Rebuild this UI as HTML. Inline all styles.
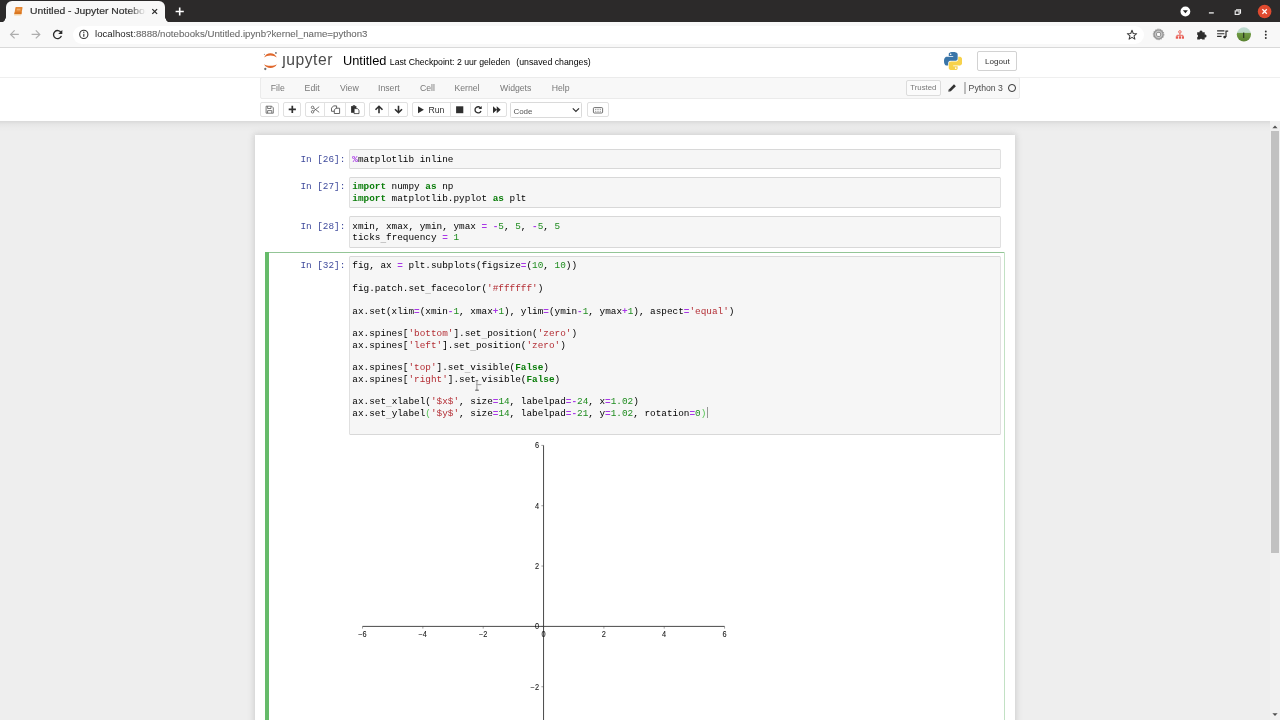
<!DOCTYPE html>
<html>
<head>
<meta charset="utf-8">
<title>Untitled - Jupyter Notebook</title>
<style>
*{box-sizing:border-box;margin:0;padding:0}
html,body{width:1280px;height:720px;overflow:hidden;background:#eeeeee;font-family:"Liberation Sans",sans-serif;color:#000}
.abs{position:absolute}
#root{will-change:transform;position:relative;width:1280px;height:720px;overflow:hidden;background:#eeeeee}
/* ---------- browser chrome ---------- */
#titlebar{left:0;top:0;width:1280px;height:22.4px;background:#2c2a2a}
#tab{left:5.6px;top:1px;width:159.4px;height:22px;background:#f8f8f8;border-radius:6px 6px 0 0}
#tab:before,#tab:after{content:"";position:absolute;bottom:0;width:6px;height:6px;background:radial-gradient(circle at 0 0,rgba(0,0,0,0) 5.5px,#f8f8f8 6px)}
#tab:before{left:-6px}
#tab:after{right:-6px;background:radial-gradient(circle at 100% 0,rgba(0,0,0,0) 5.5px,#f8f8f8 6px)}
#tabtitle{-webkit-text-stroke:0.2px #333;left:29.7px;font-size:9.8px;line-height:14px;color:#333;white-space:nowrap;width:108.6px;overflow:hidden;transform:scaleX(1.059);transform-origin:0 0}
#tabfade{left:129px;top:3px;width:17px;height:17px;background:linear-gradient(90deg,rgba(248,248,248,0),#f8f8f8)}
#navbar{left:0;top:22px;width:1280px;height:26px;background:#f8f8f8;border-bottom:1px solid #d9d9d9}
#urlpill{left:72.5px;top:25.5px;width:1071.5px;height:18.5px;border-radius:9.5px;background:#ffffff}
#url{left:94.8px;top:27.45px;font-size:9.4px;line-height:14px;color:#6b6b6b;white-space:nowrap;transform:scaleX(1.032);transform-origin:0 0;-webkit-text-stroke:0.1px #6b6b6b}
#url b{font-weight:normal;color:#1d1d1d;-webkit-text-stroke:0}
/* ---------- jupyter header ---------- */
#header{left:0;top:48px;width:1280px;height:73px;background:#ffffff}
#hdrshadow{left:0;top:121px;width:1270px;height:11px;background:linear-gradient(180deg,rgba(0,0,0,.09),rgba(0,0,0,.035) 28%,rgba(0,0,0,.012) 60%,rgba(0,0,0,0))}
#nbname{left:343px;top:53px;font-size:12.8px;line-height:16px;color:#000;white-space:nowrap}
#ckpt{left:389.8px;top:56px;font-size:8.7px;line-height:12px;color:#000;white-space:nowrap}
#autosave{left:516.3px;top:56px;font-size:8.75px;line-height:12px;color:#000;white-space:nowrap}
#logout{left:977.2px;top:51.3px;width:39.5px;height:20px;border:1px solid #d2d2d2;border-radius:2px;background:#fff;font-size:8.1px;line-height:20px;text-align:center;color:#333;padding-left:1px}
#menubar{left:260px;top:77px;width:760px;height:21.5px;background:#f8f8f8;border:1px solid #ebebeb;border-radius:2px}
.mi{top:83px;font-size:8.7px;line-height:10px;color:#777;white-space:nowrap}
#trusted{left:906.2px;top:80.2px;width:34.4px;height:15.4px;border:1px solid #dcdcdc;border-radius:2px;font-size:7.8px;line-height:14.2px;text-align:center;color:#777;background:#fbfbfb}
#kname{left:968.6px;top:82.6px;font-size:8.7px;line-height:11px;color:#4a4a4a;white-space:nowrap}
#ksep{left:964.1px;top:82.2px;width:1.7px;height:11.5px;background:#bdbdbd}
#kind{left:1008.3px;top:83.8px;width:7.8px;height:7.8px;border:1.25px solid #2a2a2a;border-radius:50%}
.tb{top:102px;height:15.3px;border:1px solid #e0e0e0;background:#fff}
.tdv{top:102.5px;width:1px;height:14.3px;background:#e2e2e2}
#sel{left:510.4px;top:102.2px;width:71.2px;height:15.4px;border:1px solid #dadada;border-radius:1.5px;background:#fff}
#seltxt{left:513.4px;top:106.6px;font-size:8px;line-height:10px;color:#555}
#runtxt{left:428.4px;top:104.6px;font-size:8.7px;line-height:10px;color:#333}
.tbl{border-radius:2px 0 0 2px}
.tbr{border-radius:0 2px 2px 0}
.tbs{border-radius:2px}
.tbn{border-left:none}
#sbtrack{left:1270px;top:121px;width:10px;height:599px;background:#f1f1f1}
#sbthumb{left:1271.4px;top:131px;width:7.2px;height:422px;background:#c1c1c1}
/* ---------- notebook ---------- */
#nbc{left:255px;top:134.6px;width:760px;height:600px;background:#fff;box-shadow:0 0 6px 1px rgba(87,87,87,.22)}
.prompt{font-family:"Liberation Mono",monospace;font-size:9.37px;line-height:11.33px;color:#3f4a9c;white-space:pre;left:0;top:0;transform-origin:0 0}
.ia{left:349px;width:652px;background:#f6f6f6;border:1px solid #e0e0e0;border-top-color:#d8d8d8;border-bottom-color:#d8d8d8;border-radius:1.5px}
.code{font-family:"Liberation Mono",monospace;font-size:9.37px;line-height:11.33px;color:#000;white-space:pre;left:0;top:0;transform-origin:0 0}
#selcell{left:265px;top:252.1px;width:740px;height:500px;border:1px solid #c2e1c4;border-top-color:#93c596;border-radius:1.3px}
#selbar{left:265px;top:252.1px;width:3.6px;height:500px;background:#66bb6a}
.mb{color:#55c555}
.u{color:#8f8f8f;position:relative;top:1.5px}
#caret{left:706.5px;top:407.2px;width:1px;height:11.2px;background:#969696}
.k{color:#0a7d0a;font-weight:bold}
.o{color:#a838e6;font-weight:bold}
.n{color:#1f8c1f}
.s{color:#b32d34}
</style>
</head>
<body>
<div id="root">
<!-- browser chrome -->
<div id="navbar" class="abs"></div>
<div id="titlebar" class="abs"></div>
<div id="tab" class="abs"></div>
<div id="tabtitle" class="abs" style="top:4.3px">Untitled - Jupyter Notebook</div>
<div id="tabfade" class="abs"></div>
<div id="urlpill" class="abs"></div>
<div id="url" class="abs"><b>localhost</b>:8888/notebooks/Untitled.ipynb?kernel_name=python3</div>

<!--CHR-->
<svg class="abs" id="chromeicons" style="left:0;top:0" width="1280" height="48" viewBox="0 0 1280 48"><path d="M16 7.1H22.1Q22.6 7.1 22.5 7.7L21.4 14.2H14.3L15.4 7.7Q15.5 7.1 16 7.1Z" fill="#e3842f"/><path d="M14.3 14.1H21.4L21.2 15.1Q21.1 15.5 20.7 15.5H14.6Q14.1 15.5 14.2 15Z" fill="#f4d3a6"/><path d="M14.8 12.2H21.6L21.4 14.1H14.4Z" fill="#d9741f"/><path d="M16.7 9.8H20.4" stroke="#f7c891" stroke-width="0.9"/><path d="M16.9 8.3H20.6" stroke="#eda05a" stroke-width="0.6"/><path d="M152.3 9.1L157.1 13.9M157.1 9.1L152.3 13.9" stroke="#2a2a2a" stroke-width="1.25" fill="none"/><path d="M179.7 7.4V15.6M175.6 11.5H183.8" stroke="#fff" stroke-width="1.6" fill="none"/><g stroke="#adadad" stroke-width="1.2" fill="none"><path d="M18.8 34.4H10.8M14.6 30.4L10.6 34.4L14.6 38.4"/><path d="M31.6 34.4H39.6M35.8 30.4L39.8 34.4L35.8 38.4"/></g><path d="M61.1 32.6A4.05 4.05 0 1 0 61.4 35.9" stroke="#2b2b2b" stroke-width="1.35" fill="none"/><path d="M62.3 29.9V34H58.2Z" fill="#2b2b2b"/><circle cx="83.8" cy="34.4" r="4.1" stroke="#363636" stroke-width="1.1" fill="none"/><path d="M83.8 33.8V36.8" stroke="#363636" stroke-width="1.15"/><circle cx="83.8" cy="32.2" r="0.68" fill="#363636"/><path d="M1132.00 30.30L1133.26 33.46L1136.66 33.69L1134.04 35.86L1134.88 39.16L1132.00 37.35L1129.12 39.16L1129.96 35.86L1127.34 33.69L1130.74 33.46Z" stroke="#3d3d3d" stroke-width="1.05" fill="none" stroke-linejoin="round"/><defs><radialGradient id="gg"><stop offset="0" stop-color="#fff"/><stop offset="0.28" stop-color="#f4f4f4"/><stop offset="0.4" stop-color="#8c8c8c"/><stop offset="0.62" stop-color="#c9c9c9"/><stop offset="0.85" stop-color="#9a9a9a"/><stop offset="1" stop-color="#7d7d7d"/></radialGradient></defs><circle cx="1158.6" cy="34.4" r="5.0" fill="url(#gg)"/><circle cx="1158.6" cy="34.4" r="5.3" fill="none" stroke="#8a8a8a" stroke-width="0.9" stroke-dasharray="1.3 1.0"/><g fill="none" stroke="#e8584f" stroke-width="0.9"><circle cx="1179.9" cy="31.9" r="1.25"/><path d="M1179.9 33.2V35.3M1176.9 36.4V35.3H1182.9V36.4"/></g><g fill="#e8584f"><rect x="1175.8" y="36.3" width="2.2" height="2.4"/><rect x="1178.8" y="36.3" width="2.2" height="2.4"/><rect x="1181.8" y="36.3" width="2.2" height="2.4"/></g><path d="M1197.2 32.3H1199.6A1.45 1.45 0 1 1 1202.4 32.3H1204.7V34.6A1.45 1.45 0 1 1 1204.7 37.4V39.6H1202.3A1.4 1.4 0 0 0 1199.7 39.6H1197.2V37.3A1.4 1.4 0 0 0 1197.2 34.7Z" fill="#2d2d2d"/><g stroke="#2d2d2d" stroke-width="1.1" fill="none"><path d="M1217.1 30.9H1224.4M1217.1 33.7H1224.4M1217.1 36.4H1221.6"/><path d="M1226 37V31.1H1228.2" stroke-width="1.2"/></g><circle cx="1224.7" cy="37.1" r="1.45" fill="#2d2d2d"/><defs><clipPath id="av"><circle cx="1243.9" cy="34.4" r="7.1"/></clipPath><linearGradient id="avg" x1="0" y1="0" x2="0" y2="1"><stop offset="0" stop-color="#c2ddd6"/><stop offset="0.36" stop-color="#bcd9c6"/><stop offset="0.42" stop-color="#6f9a43"/><stop offset="1" stop-color="#57802f"/></linearGradient></defs><g clip-path="url(#av)"><rect x="1236" y="27" width="16" height="15" fill="url(#avg)"/><rect x="1243" y="32.6" width="1.3" height="5.4" fill="#2c3a22"/></g><circle cx="1265.8" cy="31.5" r="0.95" fill="#2d2d2d"/><circle cx="1265.8" cy="34.8" r="0.95" fill="#2d2d2d"/><circle cx="1265.8" cy="38.0" r="0.95" fill="#2d2d2d"/><circle cx="1185.4" cy="11.5" r="4.9" fill="#fff"/><path d="M1182.9 10.2H1187.9L1185.4 13.2Z" fill="#222"/><path d="M1208.9 12.9H1213.8" stroke="#e2e2e2" stroke-width="1.4"/><g stroke="#f2f2f2" stroke-width="1.1" fill="none"><path d="M1236.6 10.6V9.7H1240.5V13.2H1239.6"/><rect x="1235.2" y="10.9" width="3.9" height="3.5" fill="#2c2a2a"/></g><circle cx="1264.6" cy="11.5" r="6.8" fill="#e04a2f"/><path d="M1262.4 9.3L1266.8 13.7M1266.8 9.3L1262.4 13.7" stroke="#fff" stroke-width="1.25" fill="none"/></svg>
<!--/CHR-->
<!-- jupyter header -->
<div id="header" class="abs"></div>
<div class="abs" style="left:0;top:76.7px;width:1280px;height:1px;background:#efefef"></div>
<div id="nbname" class="abs">Untitled</div>
<div id="ckpt" class="abs">Last Checkpoint: 2 uur geleden</div>
<div id="autosave" class="abs">(unsaved changes)</div>
<div id="logout" class="abs">Logout</div>
<div id="menubar" class="abs"></div>
<div class="abs mi" style="left:270.8px">File</div>
<div class="abs mi" style="left:304.6px">Edit</div>
<div class="abs mi" style="left:340px">View</div>
<div class="abs mi" style="left:378px">Insert</div>
<div class="abs mi" style="left:420px">Cell</div>
<div class="abs mi" style="left:454.4px">Kernel</div>
<div class="abs mi" style="left:500px">Widgets</div>
<div class="abs mi" style="left:551.7px">Help</div>
<div id="trusted" class="abs">Trusted</div>
<div id="ksep" class="abs"></div>
<div id="kname" class="abs">Python 3</div>
<div id="kind" class="abs"></div>

<!--HDR-->
<svg class="abs" id="jlogo" style="left:258px;top:48px" width="80" height="28" viewBox="258 48 80 28">
<path d="M264.1 57.6 C266.2 51.9 274.7 51.9 276.8 57.6 C273.8 54.8 267.1 54.8 264.1 57.6Z" fill="#e0672b"/>
<path d="M264.1 64.2 C266.2 69.3 274.7 69.3 276.8 64.2 C273.8 66.3 267.1 66.3 264.1 64.2Z" fill="#e0672b"/>
<circle cx="275.9" cy="52.9" r="0.95" fill="#767677"/>
<circle cx="264.4" cy="54.4" r="0.55" fill="#989798"/>
<circle cx="265.3" cy="69.0" r="1.15" fill="#6f7070"/>
<text x="282.3" y="64.7" font-family="Liberation Sans, sans-serif" font-size="15.7" letter-spacing="0.5" fill="#4a4a4a">&#x237;upyter</text>
</svg>
<svg class="abs" id="pylogo" style="left:943.8px;top:51.7px" width="18.5" height="18.5" viewBox="0 0 110 110">
<path fill="#3a75a8" d="M54.3 0C26.5 0 28.3 12 28.3 12l0 12.5h26.5v3.7H17.8S0 26.200 0 54.100c0 27.900 15.500 26.900 15.500 26.900h9.300V68.100s-.5-15.500 15.300-15.500h26.300s14.800.2 14.800-14.300V14.300S83.400 0 54.300 0zM39.700 8.400a4.800 4.800 0 1 1 0 9.600 4.800 4.800 0 0 1 0-9.600z"/>
<path fill="#f7d24c" d="M55.100 109.200c27.800 0 26-12 26-12l0-12.500H54.600v-3.700h37S109.400 83 109.400 55.100c0-27.900-15.500-26.900-15.500-26.900h-9.300v12.900s.5 15.500-15.300 15.500H43s-14.800-.2-14.800 14.300v24S26 109.200 55.100 109.200zM69.700 100.800a4.800 4.800 0 1 1 0-9.600 4.800 4.800 0 0 1 0 9.600z"/>
</svg>
<div class="abs tb tbs" style="left:260.3px;width:18.30px"></div>
<div class="abs tb tbs" style="left:282.8px;width:18.00px"></div>
<div class="abs tb tbs" style="left:304.9px;width:59.90px"></div>
<div class="abs tb tbs" style="left:368.6px;width:39.80px"></div>
<div class="abs tb tbs" style="left:412.2px;width:94.70px"></div>
<div class="abs tb tbs" style="left:587.2px;width:21.60px"></div>
<div class="abs tdv" style="left:324.1px"></div>
<div class="abs tdv" style="left:344.5px"></div>
<div class="abs tdv" style="left:387.9px"></div>
<div class="abs tdv" style="left:450.0px"></div>
<div class="abs tdv" style="left:469.5px"></div>
<div class="abs tdv" style="left:487.1px"></div>
<div class="abs" id="sel"></div><div class="abs" id="seltxt">Code</div>
<div class="abs" id="runtxt">Run</div>
<svg class="abs" id="tbicons" style="left:255px;top:98px" width="360" height="24" viewBox="255 98 360 24"><g fill="none" stroke="#555" stroke-width="0.78"><path d="M266.1 106.2H271.7L273.3 107.8V113.2H266.1Z"/><path d="M267.6 106.3V108.5H271V106.3M267.6 113.1V110.6H271.8V113.1"/></g><path d="M292.3 105.8V113M288.7 109.4H295.9" stroke="#2f2f2f" stroke-width="1.7" fill="none"/><g fill="none" stroke="#555" stroke-width="0.8"><circle cx="312.6" cy="107.4" r="1.25"/><circle cx="312.6" cy="111.8" r="1.25"/><path d="M313.6 108.1L319.2 112.3M313.6 111.1L319.2 106.7"/></g><g fill="#fff" stroke="#4a4a4a" stroke-width="0.85"><path d="M331.5 108.1L333.5 105.9H336.6V111.3H331.5Z"/><path d="M334.3 110L335.9 108.2H339.6V113.5H334.3Z"/></g><path d="M351.1 106.1H356.4V112.8H351.1Z" fill="#2f2f2f"/><path d="M354.1 108.6H357.4L359 110.2V113.6H354.1Z" fill="#fff" stroke="#2f2f2f" stroke-width="0.8"/><path d="M352.8 105.7H355.2" stroke="#2f2f2f" stroke-width="0.9"/><path d="M379 113.2V106.6M375.5 109.8L379 106.3L382.5 109.8" stroke="#2f2f2f" stroke-width="1.6" fill="none"/><path d="M398.5 105.8V112.4M395 109.2L398.5 112.7L402 109.2" stroke="#2f2f2f" stroke-width="1.6" fill="none"/><path d="M418 106.2L423.9 109.7L418 113.2Z" fill="#2f2f2f"/><rect x="456.1" y="106.3" width="7.2" height="6.9" fill="#2f2f2f"/><path d="M480.9 108.4A3.1 3.1 0 1 0 481.0 111.0" stroke="#2f2f2f" stroke-width="1.35" fill="none"/><path d="M481.7 105.9V109.1H478.5Z" fill="#2f2f2f"/><path d="M493 106.2L496.9 109.7L493 113.2ZM496.7 106.2L500.7 109.7L496.7 113.2Z" fill="#2f2f2f"/><path d="M572.8 108.4L575.9 111.4L579 108.4" stroke="#2f2f2f" stroke-width="1.2" fill="none"/><rect x="593.4" y="107.6" width="9.2" height="5.4" rx="0.9" fill="none" stroke="#555" stroke-width="0.85"/><path d="M595 109.4H601M595 111.3H601" stroke="#777" stroke-width="0.8" stroke-dasharray="0.9 0.8"/></svg>
<svg class="abs" style="left:946px;top:82px" width="12" height="12" viewBox="946 82 12 12"><path d="M948.4 91.6L948.9 89.4L954 84.3L955.9 86.2L950.8 91.3Z" fill="#333"/><path d="M948.4 91.6L949 89.6L950.5 91.1Z" fill="#555"/></svg>
<!--/HDR-->
<!-- notebook -->
<div id="nbc" class="abs"></div>
<!--CELLS-->
<div class="abs ia" style="top:148.70px;height:20.13px"></div>
<div class="abs prompt" style="transform:translate(300.4px,153.50px) rotate(.01deg)">In [26]:</div>
<div class="abs code" style="transform:translate(352.3px,153.50px) rotate(.01deg)"><span class="o">%</span>matplotlib inline</div>
<div class="abs ia" style="top:176.80px;height:31.47px"></div>
<div class="abs prompt" style="transform:translate(300.4px,181.45px) rotate(.01deg)">In [27]:</div>
<div class="abs code" style="transform:translate(352.3px,181.45px) rotate(.01deg)"><span class="k">import</span> numpy <span class="k">as</span> np</div>
<div class="abs code" style="transform:translate(352.3px,192.78px) rotate(.01deg)"><span class="k">import</span> matplotlib.pyplot <span class="k">as</span> plt</div>
<div class="abs ia" style="top:216.30px;height:31.47px"></div>
<div class="abs prompt" style="transform:translate(300.4px,220.90px) rotate(.01deg)">In [28]:</div>
<div class="abs code" style="transform:translate(352.3px,220.90px) rotate(.01deg)">xmin, xmax, ymin, ymax <span class="o">=</span> <span class="o">-</span><span class="n">5</span>, <span class="n">5</span>, <span class="o">-</span><span class="n">5</span>, <span class="n">5</span></div>
<div class="abs code" style="transform:translate(352.3px,232.23px) rotate(.01deg)">ticks<span class="u">_</span>frequency <span class="o">=</span> <span class="n">1</span></div>
<div class="abs" id="selcell"></div><div class="abs" id="selbar"></div>
<div class="abs ia" style="top:256.10px;height:178.80px"></div>
<div class="abs prompt" style="transform:translate(300.4px,260.35px) rotate(.01deg)">In [32]:</div>
<div class="abs code" style="transform:translate(352.3px,260.35px) rotate(.01deg)">fig, ax <span class="o">=</span> plt.subplots(figsize<span class="o">=</span>(<span class="n">10</span>, <span class="n">10</span>))</div>
<div class="abs code" style="transform:translate(352.3px,283.02px) rotate(.01deg)">fig.patch.set<span class="u">_</span>facecolor(<span class="s">'#ffffff'</span>)</div>
<div class="abs code" style="transform:translate(352.3px,305.68px) rotate(.01deg)">ax.set(xlim<span class="o">=</span>(xmin<span class="o">-</span><span class="n">1</span>, xmax<span class="o">+</span><span class="n">1</span>), ylim<span class="o">=</span>(ymin<span class="o">-</span><span class="n">1</span>, ymax<span class="o">+</span><span class="n">1</span>), aspect<span class="o">=</span><span class="s">'equal'</span>)</div>
<div class="abs code" style="transform:translate(352.3px,328.35px) rotate(.01deg)">ax.spines[<span class="s">'bottom'</span>].set<span class="u">_</span>position(<span class="s">'zero'</span>)</div>
<div class="abs code" style="transform:translate(352.3px,339.68px) rotate(.01deg)">ax.spines[<span class="s">'left'</span>].set<span class="u">_</span>position(<span class="s">'zero'</span>)</div>
<div class="abs code" style="transform:translate(352.3px,362.35px) rotate(.01deg)">ax.spines[<span class="s">'top'</span>].set<span class="u">_</span>visible(<span class="k">False</span>)</div>
<div class="abs code" style="transform:translate(352.3px,373.68px) rotate(.01deg)">ax.spines[<span class="s">'right'</span>].set<span class="u">_</span>visible(<span class="k">False</span>)</div>
<div class="abs code" style="transform:translate(352.3px,396.35px) rotate(.01deg)">ax.set<span class="u">_</span>xlabel(<span class="s">'$x$'</span>, size<span class="o">=</span><span class="n">14</span>, labelpad<span class="o">=-</span><span class="n">24</span>, x<span class="o">=</span><span class="n">1.02</span>)</div>
<div class="abs code" style="transform:translate(352.3px,407.68px) rotate(.01deg)">ax.set<span class="u">_</span>ylabel<span class="mb">(</span><span class="s">'$y$'</span>, size<span class="o">=</span><span class="n">14</span>, labelpad<span class="o">=-</span><span class="n">21</span>, y<span class="o">=</span><span class="n">1.02</span>, rotation<span class="o">=</span><span class="n">0</span><span class="mb">)</span></div>
<div class="abs" id="caret"></div>
<svg class="abs" id="ibeam" style="left:473px;top:379px" width="10" height="13" viewBox="0 0 10 13"><path d="M3.9 2.2V11.2" stroke="#9a9a9a" stroke-width="1.1" fill="none"/><path d="M2.6 1.7H5.2M2.2 11.2H5.8" stroke="#444" stroke-width="0.9" fill="none"/><path d="M4.6 5.7H7.8" stroke="#888" stroke-width="0.7" fill="none"/></svg>
<svg class="abs" id="plot" style="left:0;top:0" width="1280" height="720" viewBox="0 0 1280 720"><g stroke="#353535" stroke-width="0.9" fill="none"><path d="M543.55 445.38V720M362.53 626.4H724.57"/><path d="M362.53 626.4v2.2M422.87 626.4v2.2M483.21 626.4v2.2M543.55 686.74h-2.2M543.55 626.4v2.2M543.55 626.40h-2.2M603.89 626.4v2.2M543.55 566.06h-2.2M664.23 626.4v2.2M543.55 505.72h-2.2M724.57 626.4v2.2M543.55 445.38h-2.2" stroke-width="0.5" stroke="#444"/></g><g transform="rotate(0.01)" font-family="Liberation Sans, sans-serif" font-size="8.2" fill="#161616" stroke="#161616" stroke-width="0.08"><text transform="translate(362.53 637.3) scale(.9 1)" text-anchor="middle">−6</text><text transform="translate(422.87 637.3) scale(.9 1)" text-anchor="middle">−4</text><text transform="translate(483.21 637.3) scale(.9 1)" text-anchor="middle">−2</text><text transform="translate(539.15 689.74) scale(.9 1)" text-anchor="end">−2</text><text transform="translate(543.55 637.3) scale(.9 1)" text-anchor="middle">0</text><text transform="translate(539.15 629.40) scale(.9 1)" text-anchor="end">0</text><text transform="translate(603.89 637.3) scale(.9 1)" text-anchor="middle">2</text><text transform="translate(539.15 569.06) scale(.9 1)" text-anchor="end">2</text><text transform="translate(664.23 637.3) scale(.9 1)" text-anchor="middle">4</text><text transform="translate(539.15 508.72) scale(.9 1)" text-anchor="end">4</text><text transform="translate(724.57 637.3) scale(.9 1)" text-anchor="middle">6</text><text transform="translate(539.15 448.38) scale(.9 1)" text-anchor="end">6</text></g></svg>
<!--/CELLS-->
<div id="hdrshadow" class="abs"></div>
<div id="sbtrack" class="abs"></div><div id="sbthumb" class="abs"></div>
<svg class="abs" style="left:1270px;top:121px" width="10" height="599" viewBox="1270 121 10 599"><path d="M1272.4 128.3L1275 125.4L1277.6 128.3Z" fill="#555"/><path d="M1272.4 713.2L1275 716.1L1277.6 713.2Z" fill="#505050"/></svg>

</div>
</body>
</html>
